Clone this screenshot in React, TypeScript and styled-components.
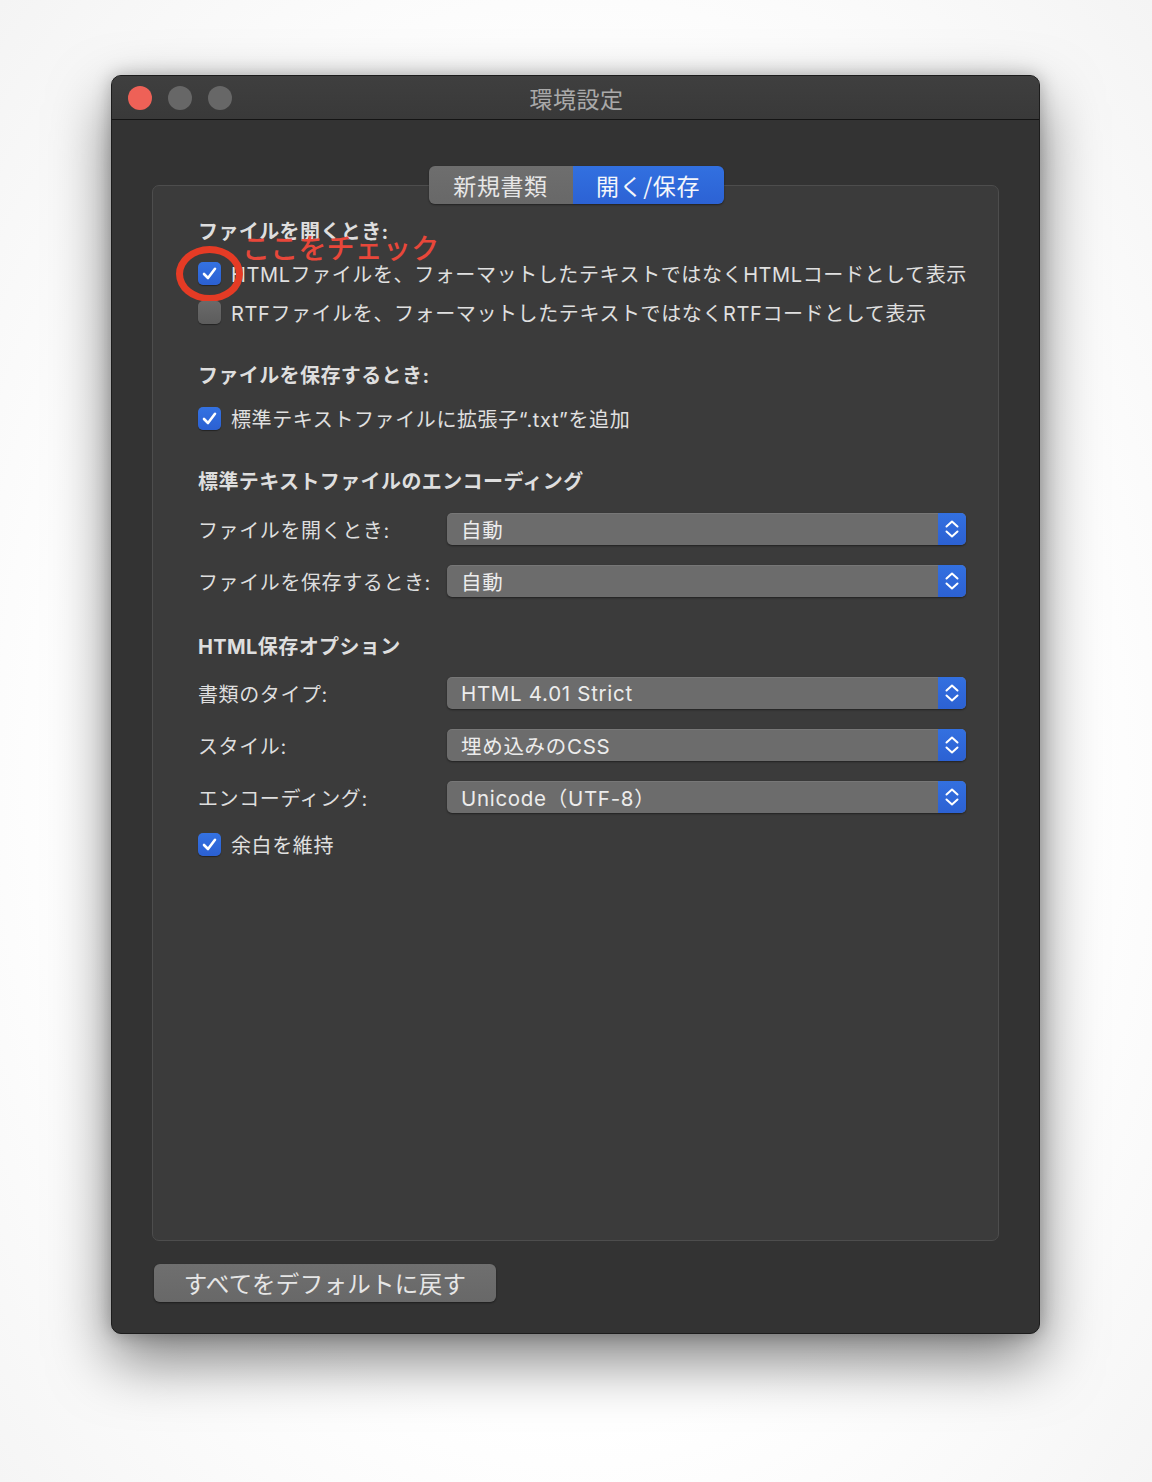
import React from "react";
import styled, { createGlobalStyle } from "styled-components";

const Global = createGlobalStyle`
  html, body { margin: 0; padding: 0; background: #ffffff; }
  body { font-family: Inter, "Noto Sans CJK JP", sans-serif; }
`;

const Page = styled.div`
  width: 1152px;
  height: 1482px;
  padding: 75px 0 0 111px;
  box-sizing: border-box;
  background: radial-gradient(ellipse at 50% 52%, #ffffff 60%, #f4f4f4 100%);
`;

const Window = styled.div`
  width: 929px;
  height: 1259px;
  box-sizing: border-box;
  border: 1px solid #1c1c1c;
  border-radius: 10px;
  overflow: hidden;
  background: #333333;
  display: flex;
  flex-direction: column;
  box-shadow: 0 26px 60px rgba(0, 0, 0, 0.5), 0 0 18px rgba(0, 0, 0, 0.25),
    inset 0 1px 0 rgba(255, 255, 255, 0.12);
`;

const TitleBar = styled.div`
  height: 43px;
  flex: none;
  border-bottom: 1px solid #141414;
  background: linear-gradient(#3f3f3f, #393939);
  display: grid;
  grid-template-columns: 1fr auto 1fr;
  align-items: center;
`;

const Lights = styled.div`
  display: flex;
  gap: 16px;
  padding-left: 16px;
`;

const Light = styled.span<{ $color: string }>`
  width: 24px;
  height: 24px;
  border-radius: 50%;
  background: ${(p) => p.$color};
`;

const Title = styled.div`
  font-family: "Noto Sans CJK JP", sans-serif;
  font-size: 23px;
  color: #a9a9a9;
  letter-spacing: 0.5px;
  transform: translateX(1px);
`;

const Content = styled.div`
  flex: 1;
  display: flex;
  flex-direction: column;
  padding: 46px 40px 31px 40px;
  min-height: 0;
`;

const TabRow = styled.div`
  display: flex;
  justify-content: center;
  position: relative;
  z-index: 1;
  padding-left: 1px;
`;

const Tabs = styled.div`
  display: flex;
  height: 38px;
  border-radius: 6px;
  overflow: hidden;
  box-shadow: 0 1px 2px rgba(0, 0, 0, 0.45);
`;

const Tab = styled.div<{ $active?: boolean; $w: number }>`
  width: ${(p) => p.$w}px;
  display: flex;
  align-items: center;
  justify-content: center;
  font-family: "Noto Sans CJK JP", sans-serif;
  font-size: 23px;
  letter-spacing: 0.6px;
  color: ${(p) => (p.$active ? "#f4f6fb" : "#e6e6e6")};
  background: ${(p) =>
    p.$active ? "linear-gradient(#3270e0, #2c62d4)" : "linear-gradient(#6e6e6e, #686868)"};
`;

const Box = styled.div`
  flex: 1;
  margin-top: -19px;
  border: 1px solid #4d4d4d;
  border-radius: 7px;
  background: #3b3b3b;
  padding: 33px 32px 0 45px;
  display: flex;
  flex-direction: column;
  gap: 37px;
`;

const Section = styled.div<{ $gap: number }>`
  display: flex;
  flex-direction: column;
  gap: ${(p) => p.$gap}px;
`;

const Rows = styled.div<{ $gap: number }>`
  display: flex;
  flex-direction: column;
  gap: ${(p) => p.$gap}px;
`;

const Header = styled.div`
  height: 26px;
  line-height: 26px;
  font-size: 20px;
  font-weight: 700;
  letter-spacing: 0.4px;
  color: #dedede;
  white-space: nowrap;
`;

const CheckRow = styled.div`
  position: relative;
  height: 28px;
  display: flex;
  align-items: center;
  gap: 10px;
  font-size: 20px;
  letter-spacing: 0.6px;
  color: #e0e0e0;
  white-space: nowrap;
`;

const Check = styled.span<{ $on?: boolean }>`
  width: 23px;
  height: 23px;
  flex: none;
  border-radius: 5px;
  box-sizing: border-box;
  display: flex;
  align-items: center;
  justify-content: center;
  background: ${(p) => (p.$on ? "linear-gradient(#3472e2, #2b60d2)" : "linear-gradient(#6a6a6a, #5c5c5c)")};
  box-shadow: 0 1px 1px rgba(0, 0, 0, 0.4);
`;

const FieldRow = styled.div`
  height: 32px;
  display: grid;
  grid-template-columns: 249px 519px;
  align-items: center;
  font-size: 20px;
  letter-spacing: 0.6px;
  color: #dedede;
  white-space: nowrap;
`;

const Popup = styled.div`
  height: 32px;
  border-radius: 5px;
  overflow: hidden;
  display: flex;
  background: #6c6c6c;
  box-shadow: 0 1px 2px rgba(0, 0, 0, 0.45), inset 0 1px 0 rgba(255, 255, 255, 0.08);
`;

const PopupText = styled.div`
  flex: 1;
  display: flex;
  align-items: center;
  padding-left: 14px;
  font-size: 20.5px;
  letter-spacing: 0.7px;
  color: #ececec;
`;

const PopupArrows = styled.div`
  width: 28px;
  flex: none;
  display: flex;
  align-items: center;
  justify-content: center;
  background: linear-gradient(#3370e0, #2c61d3);
`;

const Annotation = styled.div`
  position: absolute;
  left: -22px;
  top: -13px;
  width: 67px;
  height: 56px;
  box-sizing: border-box;
  border: 7px solid #e53b25;
  border-radius: 50%;
  pointer-events: none;
`;

const AnnotationText = styled.div`
  position: absolute;
  left: 44px;
  top: -27px;
  font-family: "Noto Sans CJK JP", sans-serif;
  font-size: 28px;
  font-weight: 500;
  line-height: 30px;
  letter-spacing: 0.2px;
  color: #e8473a;
  pointer-events: none;
`;

const Footer = styled.div`
  margin-top: 23px;
  padding-left: 2px;
  display: flex;
`;

const Button = styled.div`
  width: 342px;
  height: 38px;
  border-radius: 6px;
  background: linear-gradient(#6f6f6f, #686868);
  box-shadow: 0 1px 2px rgba(0, 0, 0, 0.45);
  display: flex;
  align-items: center;
  justify-content: center;
  font-family: "Noto Sans CJK JP", sans-serif;
  font-size: 23.5px;
  letter-spacing: 0.3px;
  color: #e6e6e6;
`;

const CheckMark = () => (
  <svg width="19" height="19" viewBox="0 0 19 19">
    <path d="M4 10 L8 14 L15 4.8" fill="none" stroke="#ffffff" strokeWidth="2.6" strokeLinecap="round" strokeLinejoin="round" />
  </svg>
);

const Arrows = () => (
  <svg width="18" height="26" viewBox="0 0 18 26">
    <path d="M3.5 10.5 L9 5.5 L14.5 10.5" fill="none" stroke="#ffffff" strokeWidth="2" strokeLinecap="round" strokeLinejoin="round" />
    <path d="M3.5 15.5 L9 20.5 L14.5 15.5" fill="none" stroke="#ffffff" strokeWidth="2" strokeLinecap="round" strokeLinejoin="round" />
  </svg>
);

const CheckBoxRow = ({ on, children, annotate }: { on?: boolean; children: React.ReactNode; annotate?: boolean }) => (
  <CheckRow>
    <Check $on={on}>{on && <CheckMark />}</Check>
    <span>{children}</span>
    {annotate && (
      <>
        <Annotation />
        <AnnotationText>ここをチェック</AnnotationText>
      </>
    )}
  </CheckRow>
);

const Field = ({ label, value }: { label: string; value: string }) => (
  <FieldRow>
    <span>{label}</span>
    <Popup>
      <PopupText>{value}</PopupText>
      <PopupArrows>
        <Arrows />
      </PopupArrows>
    </Popup>
  </FieldRow>
);

export default function App() {
  return (
    <Page>
      <Global />
      <Window>
        <TitleBar>
          <Lights>
            <Light $color="#ee6157" />
            <Light $color="#676767" />
            <Light $color="#676767" />
          </Lights>
          <Title>環境設定</Title>
          <span />
        </TitleBar>
        <Content>
          <TabRow>
            <Tabs>
              <Tab $w={144}>新規書類</Tab>
              <Tab $w={151} $active>
                開く/保存
              </Tab>
            </Tabs>
          </TabRow>
          <Box>
            <Section $gap={14}>
              <Header>ファイルを開くとき:</Header>
              <Rows $gap={11}>
                <CheckBoxRow on annotate>
                  HTMLファイルを、フォーマットしたテキストではなくHTMLコードとして表示
                </CheckBoxRow>
                <CheckBoxRow>RTFファイルを、フォーマットしたテキストではなくRTFコードとして表示</CheckBoxRow>
              </Rows>
            </Section>
            <Section $gap={15}>
              <Header>ファイルを保存するとき:</Header>
              <CheckBoxRow on>標準テキストファイルに拡張子“.txt”を追加</CheckBoxRow>
            </Section>
            <Section $gap={18}>
              <Header>標準テキストファイルのエンコーディング</Header>
              <Rows $gap={20}>
                <Field label="ファイルを開くとき:" value="自動" />
                <Field label="ファイルを保存するとき:" value="自動" />
              </Rows>
            </Section>
            <Section $gap={17}>
              <Header>HTML保存オプション</Header>
              <Rows $gap={20}>
                <Field label="書類のタイプ:" value="HTML 4.01 Strict" />
                <Field label="スタイル:" value="埋め込みのCSS" />
                <Field label="エンコーディング:" value="Unicode（UTF-8）" />
              </Rows>
              <CheckBoxRow on>余白を維持</CheckBoxRow>
            </Section>
          </Box>
          <Footer>
            <Button>すべてをデフォルトに戻す</Button>
          </Footer>
        </Content>
      </Window>
    </Page>
  );
}
